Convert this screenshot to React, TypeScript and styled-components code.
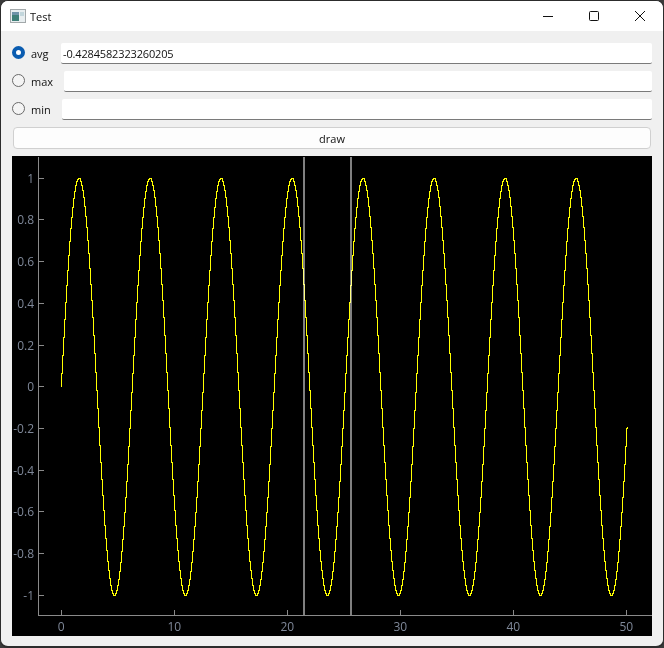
import React from "react";
import styled, { createGlobalStyle } from "styled-components";

const GlobalStyle = createGlobalStyle`
  html, body {
    margin: 0;
    padding: 0;
    background: #3a3a3a;
  }
`;

const PlotW = 640;
const PlotH = 480;
const X0 = 49.3;
const XScale = 11.3;
const Y0 = 230.3;
const YScale = 208.6;
const XEnd = 50.07;

const xTicks = [0, 10, 20, 30, 40, 50];
const yTicks = ["1", "0.8", "0.6", "0.4", "0.2", "0", "-0.2", "-0.4", "-0.6", "-0.8", "-1"];

// one vertical run per pixel column, the plot is not antialiased
const wave = () => {
  const yAt = (px: number) => {
    const x = Math.min(XEnd, Math.max(0, (px - X0) / XScale));
    return Math.round(Y0 - Math.sin(x) * YScale);
  };
  const first = Math.floor(X0);
  const last = Math.floor(X0 + XEnd * XScale);
  let d = "";
  for (let px = first; px <= last; px++) {
    const a = yAt(px);
    const b = yAt(px + 1);
    d += `M${px + 0.5} ${Math.min(a, b)}V${Math.max(a, b) + 1}`;
  }
  return d;
};

const rows = [
  { label: "avg", value: "-0.4284582323260205", checked: true, inset: 0 },
  { label: "max", value: "", checked: false, inset: 3 },
  { label: "min", value: "", checked: false, inset: 1 },
];

const App = () => {
  return (
    <>
      <GlobalStyle />
      <Window>
        <TitleBar>
          <AppIcon viewBox="0 0 16 16">
            <rect x="0.5" y="1.5" width="15" height="13" fill="#e8eef0" stroke="#a2a8aa" />
            <rect x="2" y="4" width="7" height="9" fill="#3f7f78" />
            <rect x="2" y="4" width="7" height="3" fill="#6f93a8" />
            <rect x="10" y="4" width="4" height="4" fill="#c2d6dc" />
          </AppIcon>
          <Title>Test</Title>
          <Controls>
            <Control>
              <svg width="10" height="10" viewBox="0 0 10 10">
                <path d="M0 5.5H10" stroke="#111" strokeWidth="1" />
              </svg>
            </Control>
            <Control>
              <svg width="10" height="10" viewBox="0 0 10 10">
                <rect x="0.5" y="0.5" width="9" height="9" rx="1" fill="none" stroke="#111" />
              </svg>
            </Control>
            <Control>
              <svg width="10" height="10" viewBox="0 0 10 10">
                <path d="M0 0L10 10M10 0L0 10" stroke="#111" strokeWidth="1" />
              </svg>
            </Control>
          </Controls>
        </TitleBar>
        <Content>
          {rows.map((row) => (
            <Row key={row.label}>
              <Radio $checked={row.checked} />
              <Label>{row.label}</Label>
              <Field $inset={row.inset} readOnly value={row.value} />
            </Row>
          ))}
          <DrawButton>draw</DrawButton>
          <Plot viewBox={`0 0 ${PlotW} ${PlotH}`} width={PlotW} height={PlotH}>
            <g shapeRendering="crispEdges">
              <line x1="26.5" y1="1" x2="26.5" y2="459.5" stroke="#8a8a8a" />
              <line x1="26" y1="459.5" x2="640" y2="459.5" stroke="#8a8a8a" />
              {xTicks.map((t) => (
                <line
                  key={t}
                  x1={Math.round(X0 + t * XScale) + 0.5}
                  x2={Math.round(X0 + t * XScale) + 0.5}
                  y1="454"
                  y2="459"
                  stroke="#8a8a8a"
                />
              ))}
              {yTicks.map((t) => (
                <line
                  key={t}
                  x1="27"
                  x2="32"
                  y1={Math.round(Y0 - Number(t) * YScale) + 0.5}
                  y2={Math.round(Y0 - Number(t) * YScale) + 0.5}
                  stroke="#8a8a8a"
                />
              ))}
            </g>
            {xTicks.map((t) => (
              <AxisText key={t} x={X0 + t * XScale} y="475" textAnchor="middle">
                {t}
              </AxisText>
            ))}
            {yTicks.map((t) => (
              <AxisText key={t} x="22" y={Y0 - Number(t) * YScale + 5} textAnchor="end">
                {t}
              </AxisText>
            ))}
            <path d={wave()} fill="none" stroke="#ffff00" strokeWidth="1" shapeRendering="crispEdges" />
            <g shapeRendering="crispEdges">
              <Cursor x="291" y="1" width="2" height="458" />
              <Cursor x="338" y="1" width="2" height="458" />
            </g>
          </Plot>
        </Content>
      </Window>
    </>
  );
};

export default App;

const Window = styled.div`
  width: 664px;
  height: 648px;
  box-sizing: border-box;
  border: 1px solid #2c2c2c;
  border-bottom-width: 2px;
  border-radius: 8px;
  overflow: hidden;
  background: #f0f0f0;
  font-family: "Open Sans", "Noto Sans", sans-serif;
  color: #111;
`;

const TitleBar = styled.div`
  display: flex;
  align-items: center;
  height: 30px;
  background: #fff;
  padding-left: 9px;
`;

const AppIcon = styled.svg`
  width: 16px;
  height: 16px;
  flex: none;
`;

const Title = styled.div`
  margin-left: 4px;
  font-size: 11px;
  flex: 1;
`;

const Controls = styled.div`
  display: flex;
  align-items: center;
`;

const Control = styled.div`
  width: 46px;
  height: 30px;
  display: flex;
  align-items: center;
  justify-content: center;
`;

const Content = styled.div`
  display: flex;
  flex-direction: column;
  padding: 12px 11px 0 11px;
`;

const Row = styled.div`
  display: flex;
  align-items: center;
  height: 21px;
  margin-bottom: 7px;
`;

const Radio = styled.span<{ $checked: boolean }>`
  flex: none;
  box-sizing: border-box;
  width: 13px;
  height: 13px;
  margin-bottom: 3px;
  border-radius: 50%;
  background: ${(p) => (p.$checked ? "#fff" : "#f4f4f4")};
  border: ${(p) => (p.$checked ? "4px solid #0a5cb0" : "1px solid #6a6a6a")};
`;

const Label = styled.span`
  margin-left: 6px;
  font-size: 11px;
  width: 30px;
`;

const Field = styled.input<{ $inset: number }>`
  flex: 1;
  min-width: 0;
  height: 21px;
  box-sizing: border-box;
  margin-left: ${(p) => p.$inset}px;
  padding: 0 2px;
  border: none;
  border-bottom: 1px solid #7a7a7a;
  border-radius: 2px;
  background: #fff;
  outline: none;
  font-family: inherit;
  font-size: 11px;
  letter-spacing: -0.15px;
  color: #111;
`;

const DrawButton = styled.button`
  height: 22px;
  margin: 0 0 7px 1px;
  width: 638px;
  box-sizing: border-box;
  border: 1px solid #d0d0d0;
  border-radius: 4px;
  background: #fdfdfd;
  font-family: inherit;
  font-size: 11px;
  color: #111;
  padding: 0;
`;

const Plot = styled.svg`
  display: block;
  flex: none;
  background: #000;
`;

const AxisText = styled.text`
  font-family: "Open Sans", "Noto Sans", sans-serif;
  font-size: 12px;
  fill: #7f8899;
`;

const Cursor = styled.rect`
  fill: #808080;
  mix-blend-mode: plus-lighter;
`;
